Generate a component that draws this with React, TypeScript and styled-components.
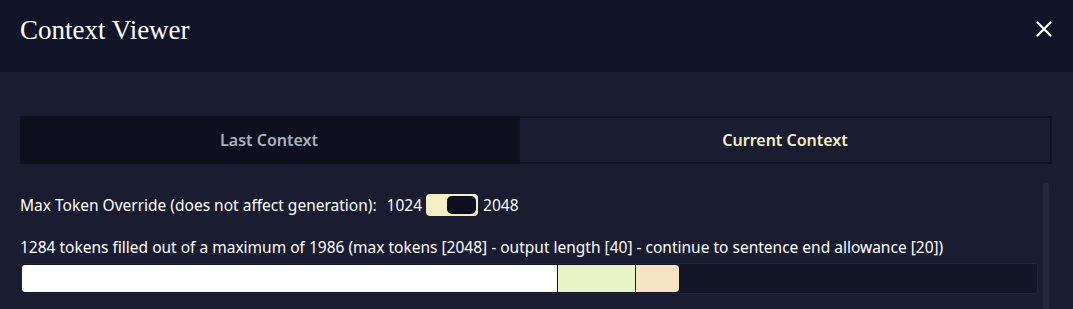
import styled, { createGlobalStyle } from 'styled-components'

const GlobalStyle = createGlobalStyle`
  html, body {
    margin: 0;
    padding: 0;
    overflow: hidden;
    background: #1a1d31;
  }
  body {
    font-family: "Noto Sans", sans-serif;
  }
`

const Modal = styled.div`
  width: 1073px;
  height: 309px;
  display: flex;
  flex-direction: column;
  background: #1a1d31;
  color: #ffffff;
  overflow: hidden;
`

const Header = styled.div`
  height: 72px;
  flex-shrink: 0;
  display: flex;
  align-items: center;
  justify-content: space-between;
  padding: 0 21px 0 20px;
  background: #12152a;
  box-sizing: border-box;
`

const Title = styled.h2`
  margin: 0 0 12px;
  font-family: "Liberation Serif", serif;
  font-weight: 400;
  font-size: 27px;
`

const CloseButton = styled.button`
  border: none;
  background: none;
  padding: 0;
  margin-bottom: 14px;
  width: 16px;
  height: 16px;
  cursor: pointer;
  display: flex;
`

const Body = styled.div`
  padding: 44px 21px 0 20px;
  display: flex;
  flex-direction: column;
`

const Tabs = styled.div`
  display: flex;
  height: 48px;
`

const Tab = styled.button<{ $active?: boolean }>`
  flex: ${(p) => (p.$active ? '532' : '500')};
  border: ${(p) => (p.$active ? '2px solid #0f1121' : 'none')};
  background: ${(p) => (p.$active ? '#1a1c31' : '#0e1020')};
  color: ${(p) => (p.$active ? '#f5efc6' : '#a9afbd')};
  font-family: "Noto Sans", sans-serif;
  font-weight: 600;
  font-size: 16px;
  cursor: pointer;
  padding: 0;
`

const Scroll = styled.div`
  margin-top: 16px;
  height: 140px;
  display: flex;
`

const Content = styled.div`
  flex: 1;
  font-family: "Noto Sans", sans-serif;
  font-size: 15.5px;
`

const ScrollThumb = styled.div`
  width: 6px;
  margin: 3px 3px 0 5px;
  border-radius: 3px;
  background: #25283f;
`

const OverrideRow = styled.div`
  display: flex;
  align-items: center;
  height: 24px;
  margin-top: 13px;
`

const Label = styled.span`
  margin-right: 10px;
`

const Toggle = styled.div`
  width: 52px;
  height: 22px;
  margin: 0 5px 0 4px;
  border-radius: 4px;
  background: #f5efc6;
  display: flex;
  justify-content: flex-end;
  align-items: center;
  padding: 0 2px;
  box-sizing: border-box;
`

const Knob = styled.div`
  width: 29px;
  height: 18px;
  border-radius: 5px;
  background: #0e0f20;
`

const Info = styled.div`
  margin-top: 20px;
  line-height: 20px;
  white-space: nowrap;
`

const Bar = styled.div`
  margin-top: 6px;
  margin-left: 1px;
  height: 31px;
  border: 1px solid #22253a;
  border-radius: 3px;
  background: #131629;
  display: flex;
  padding: 1px 0;
  box-sizing: border-box;
  overflow: hidden;
`

const Segment = styled.div<{ $color: string; $last?: boolean }>`
  background: ${(p) => p.$color};
  border-right: ${(p) => (p.$last ? 'none' : '1px solid #131629')};
  border-radius: ${(p) => (p.$last ? '0 4px 4px 0' : '0')};
  &:first-child {
    border-radius: 3px 0 0 3px;
  }
`

const segments = [
  { width: 535, color: '#ffffff' },
  { width: 77, color: '#e9f4c6' },
  { width: 43, color: '#f5e3c3' },
]

export default function App() {
  return (
    <>
      <GlobalStyle />
      <Modal>
        <Header>
          <Title>Context Viewer</Title>
          <CloseButton aria-label="Close">
            <svg width="16" height="16" viewBox="0 0 16 16">
              <path d="M1.5 1.5 L14.5 14.5 M14.5 1.5 L1.5 14.5" stroke="#ffffff" strokeWidth="2.2" strokeLinecap="round" />
            </svg>
          </CloseButton>
        </Header>
        <Body>
          <Tabs>
            <Tab>Last Context</Tab>
            <Tab $active>Current Context</Tab>
          </Tabs>
          <Scroll>
            <Content>
              <OverrideRow>
                <Label>Max Token Override (does not affect generation):</Label>
                <span>1024</span>
                <Toggle>
                  <Knob />
                </Toggle>
                <span>2048</span>
              </OverrideRow>
              <Info>
                1284 tokens filled out of a maximum of 1986 (max tokens [2048] - output length [40] - continue to sentence end allowance [20])
              </Info>
              <Bar>
                {segments.map((s, i) => (
                  <Segment
                    key={i}
                    $color={s.color}
                    $last={i === segments.length - 1}
                    style={{ width: s.width }}
                  />
                ))}
              </Bar>
            </Content>
            <ScrollThumb />
          </Scroll>
        </Body>
      </Modal>
    </>
  )
}
